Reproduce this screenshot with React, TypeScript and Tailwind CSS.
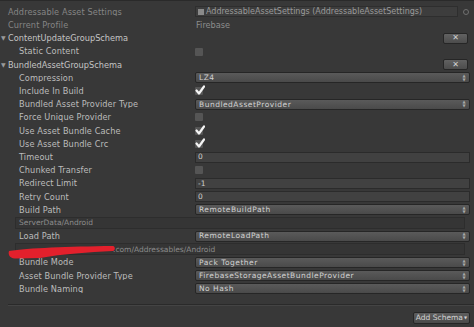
import { FC, ReactNode } from 'react'

type RowProps = {
  label: string
  indent?: boolean
  muted?: boolean
  children?: ReactNode
}

const Row: FC<RowProps> = ({ label, indent = true, muted = false, children }) => (
  <div className="flex h-[13.2px] items-center">
    <div
      className={`${indent ? 'pl-[19px]' : 'pl-[8px]'} ${muted ? 'text-[#858585]' : 'text-[#bcbcbc]'} w-[195px] shrink-0 truncate tracking-[0.1px]`}
    >
      {label}
    </div>
    <div className="flex h-full flex-1 items-center pr-[4px]">{children}</div>
  </div>
)

const Foldout: FC<{ label: string }> = ({ label }) => (
  <div className="flex h-[13.2px] items-center">
    <span className="w-[8px] pl-[1px] text-[6px] text-[#9a9a9a]">▼</span>
    <span className="flex-1 text-[#c4c4c4]">{label}</span>
    <button className="mr-[6px] flex h-[11px] w-[25px] items-center justify-center rounded-[2px] border border-[#262626] bg-gradient-to-b from-[#626262] to-[#4c4c4c] text-[8px] leading-none text-[#d0d0d0]">
      ✕
    </button>
  </div>
)

const Dropdown: FC<{ value: string }> = ({ value }) => (
  <div className="flex h-[11px] w-full items-center justify-between rounded-[2px] border border-[#262626] bg-gradient-to-b from-[#5a5a5a] to-[#4a4a4a] px-[3px] text-[7.5px] tracking-[0.5px] text-[#d2d2d2]">
    <span>{value}</span>
    <span className="flex flex-col text-[4px] leading-[4px] text-[#aaaaaa]">
      <span>▲</span>
      <span>▼</span>
    </span>
  </div>
)

const TextField: FC<{ value: string }> = ({ value }) => (
  <div className="flex h-[11px] w-full items-center border border-[#2b2b2b] bg-[#414141] px-[2px] text-[7.5px] text-[#cfcfcf]">
    {value}
  </div>
)

const Check: FC<{ checked?: boolean }> = ({ checked = false }) => (
  <div className="relative h-[8px] w-[8px] rounded-[1px] bg-[#555555]">
    {checked && (
      <svg viewBox="0 0 10 10" className="absolute -top-[2px] left-0 h-[10px] w-[10px]">
        <path d="M1.5 5.5 L4 8.5 L9 1.5" fill="none" stroke="#f4f4f4" strokeWidth="2.2" strokeLinecap="round" strokeLinejoin="round" />
      </svg>
    )}
  </div>
)

const InfoBox: FC<{ children: ReactNode }> = ({ children }) => (
  <div className="flex h-[13.2px] items-center pl-[15px] pr-[9px]">
    <div className="flex h-[12px] w-full items-center border border-[#2d2d2d] bg-[#353535] px-[3px] text-[7.5px] text-[#8c8c8c]">
      {children}
    </div>
  </div>
)

const App: FC = () => {
  return (
    <div
      className="relative h-[327px] w-[474px] overflow-hidden border-t border-[#2a2a2a] bg-[#383838] pt-[4.4px] text-[8.2px] leading-none"
      style={{ fontFamily: '"DejaVu Sans", sans-serif' }}
    >
      <Row label="Addressable Asset Settings" indent={false} muted>
        <div className="flex h-[11px] w-[263px] items-center border border-[#2e2e2e] bg-[#3d3d3d] px-[2px] text-[8px] text-[#9a9a9a]">
          <span className="mr-[2px] inline-block h-[6px] w-[6px] bg-[#8a8a8a]" />
          AddressableAssetSettings (AddressableAssetSettings)
        </div>
        <span className="ml-[5px] h-[6px] w-[6px] rounded-full border border-[#707070]" />
      </Row>
      <Row label="Current Profile" indent={false} muted>
        <span className="pl-[1px] text-[#8c8c8c]">Firebase</span>
      </Row>

      <Foldout label="ContentUpdateGroupSchema" />
      <Row label="Static Content">
        <Check />
      </Row>

      <Foldout label="BundledAssetGroupSchema" />
      <Row label="Compression">
        <Dropdown value="LZ4" />
      </Row>
      <Row label="Include In Build">
        <Check checked />
      </Row>
      <Row label="Bundled Asset Provider Type">
        <Dropdown value="BundledAssetProvider" />
      </Row>
      <Row label="Force Unique Provider">
        <Check />
      </Row>
      <Row label="Use Asset Bundle Cache">
        <Check checked />
      </Row>
      <Row label="Use Asset Bundle Crc">
        <Check checked />
      </Row>
      <Row label="Timeout">
        <TextField value="0" />
      </Row>
      <Row label="Chunked Transfer">
        <Check />
      </Row>
      <Row label="Redirect Limit">
        <TextField value="-1" />
      </Row>
      <Row label="Retry Count">
        <TextField value="0" />
      </Row>
      <Row label="Build Path">
        <Dropdown value="RemoteBuildPath" />
      </Row>
      <InfoBox>ServerData/Android</InfoBox>
      <Row label="Load Path">
        <Dropdown value="RemoteLoadPath" />
      </Row>
      <InfoBox>
        <span className="pl-[94px]">.com/Addressables/Android</span>
      </InfoBox>
      <Row label="Bundle Mode">
        <Dropdown value="Pack Together" />
      </Row>
      <Row label="Asset Bundle Provider Type">
        <Dropdown value="FirebaseStorageAssetBundleProvider" />
      </Row>
      <Row label="Bundle Naming">
        <Dropdown value="No Hash" />
      </Row>

      <div className="ml-[8px] mt-[8px] h-[2px] border-t border-b border-t-[#2a2a2a] border-b-[#444444]" />

      <div className="mt-[6px] flex justify-end pr-[4px]">
        <button className="flex h-[12px] items-center rounded-[2px] border border-[#262626] bg-gradient-to-b from-[#5e5e5e] to-[#4a4a4a] px-[2px] text-[7.5px] text-[#d4d4d4]">
          Add Schema
          <span className="ml-[1px] text-[4px]">▼</span>
        </button>
      </div>

      <svg className="absolute left-[8px] top-[243px] h-[15px] w-[108px]" viewBox="0 0 108 15">
        <path
          d="M1 7 C20 4 60 2.5 105 2 C107.5 2.5 107.5 6.5 105 7 C80 8 55 10 32 14 L7 14.5 C1 14 0 10 1 7 Z"
          fill="#e3202c"
        />
      </svg>
    </div>
  )
}

export default App
